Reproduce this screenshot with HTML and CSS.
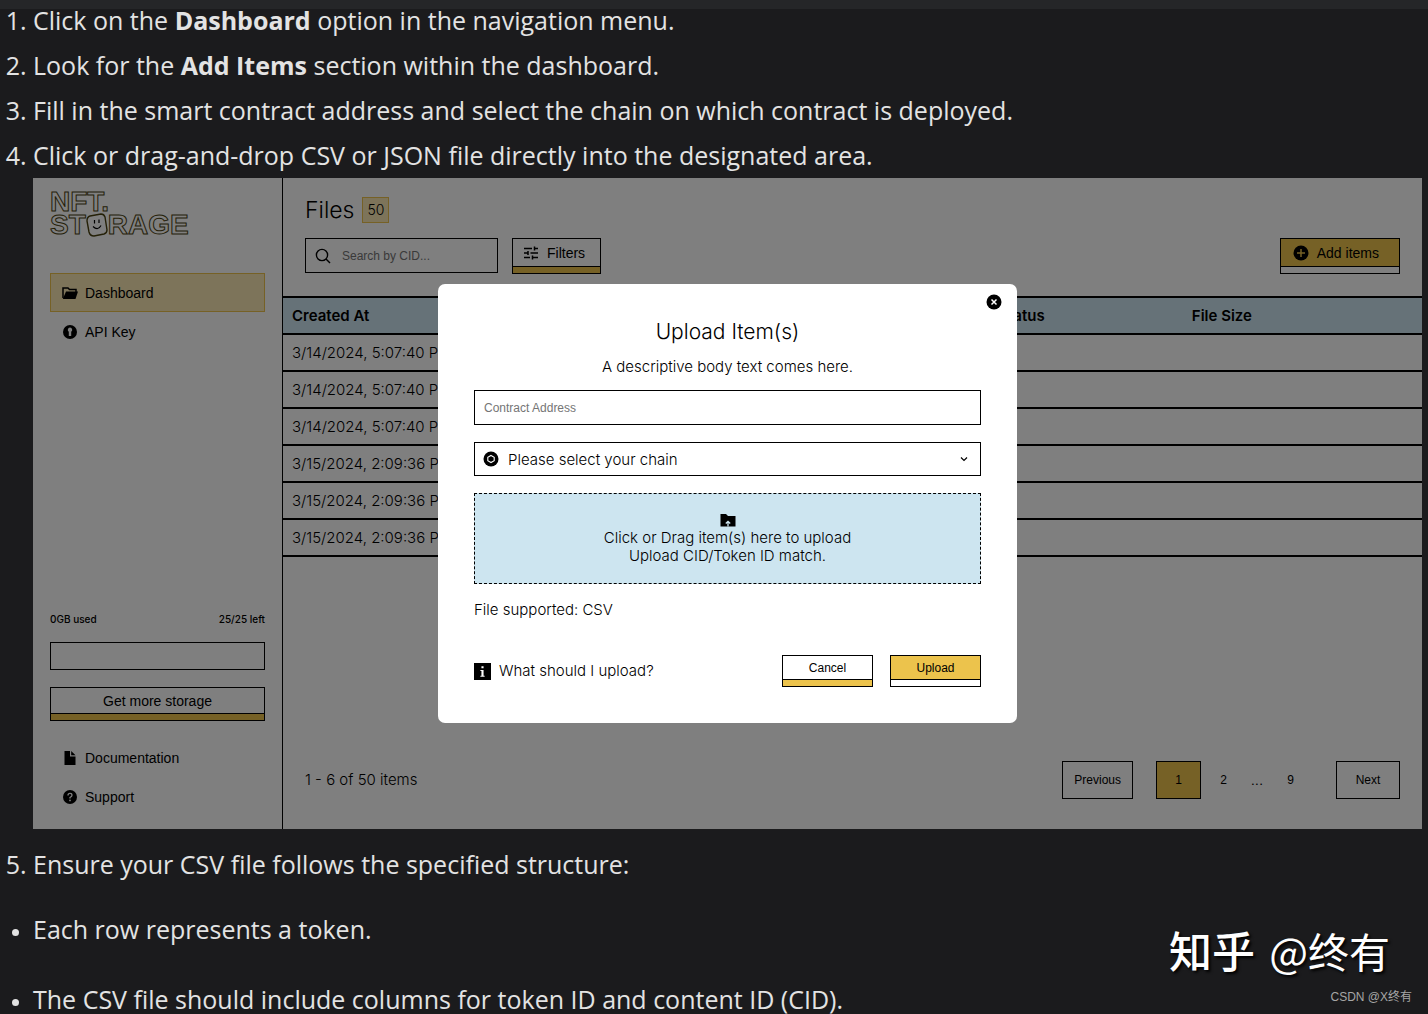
FILE: index.html
```
<!DOCTYPE html>
<html lang="en">
<head>
    <meta charset="UTF-8">
    <meta name="viewport" content="width=device-width, initial-scale=1.0">
    <title>Upload items</title>
    <link rel="stylesheet" href="styles.css">
</head>
<body>
    <main class="article">
        <ol class="steps">
            <li>Click on the <strong>Dashboard</strong> option in the navigation menu.</li>
            <li>Look for the <strong>Add Items</strong> section within the dashboard.</li>
            <li>Fill in the smart contract address and select the chain on which contract is deployed.</li>
            <li>Click or drag-and-drop CSV or JSON file directly into the designated area.
                <div class="app">
                    <!-- Sidebar -->
                    <aside class="sidebar">
                        <div class="logo">
                            <div>NFT.</div>
                            <div class="logo-row">ST<svg class="face" viewBox="0 0 22 24" width="22" height="24"><path d="M4 3 15 1q3 0 4 3l2 13q0 3-3 4L8 23q-4 0-5-4L1 8q0-4 3-5Z" fill="#fff" stroke="#4a4210" stroke-width="1.4"/><path d="M8.500 7v3.500M13 6.500V10M7 13.500q5 4.500 8-1" fill="none" stroke="#000" stroke-width="1.2"/></svg>RAGE</div>
                        </div>
                        <nav class="menu">
                            <a href="#" class="menu-item active">
                                <svg viewBox="0 0 16 16" width="16" height="16"><path d="M1 13V3h5l1.500 1.500H14V7" fill="none" stroke="#000" stroke-width="1.500"/><path d="M4 6.500h12L13.500 14H.800Z"/></svg>
                                Dashboard
                            </a>
                            <a href="#" class="menu-item">
                                <svg viewBox="0 0 16 16" width="16" height="16"><circle cx="8" cy="8" r="7"/><path d="M8 3.500a2.300 2.300 0 0 1 1.200 4.200V12H6.800V7.700A2.300 2.300 0 0 1 8 3.500Z" fill="#fff"/></svg>
                                API Key
                            </a>
                        </nav>
                        <div class="storage">
                            <div class="storage-info"><span>0GB used</span><span>25/25 left</span></div>
                            <div class="storage-bar"></div>
                            <button class="btn btn-storage">Get more storage</button>
                        </div>
                        <nav class="menu">
                            <a href="#" class="menu-item">
                                <svg viewBox="0 0 16 16" width="16" height="16"><path d="M2.500 1H8v5.500h5.500V15h-11Z"/><path d="M9.200 1 13.500 5.300H9.200Z"/></svg>
                                Documentation
                            </a>
                            <a href="#" class="menu-item">
                                <svg viewBox="0 0 16 16" width="16" height="16"><circle cx="8" cy="8" r="7"/><path d="M6 6.400q0-2 2-2t2 1.800q0 1.200-2 2.300v1" fill="none" stroke="#fff" stroke-width="1.300"/><circle cx="8" cy="11.400" r=".9" fill="#fff"/></svg>
                                Support
                            </a>
                        </nav>
                    </aside>

                    <!-- Files -->
                    <section class="files">
                        <div class="files-title">
                            <h2>Files</h2>
                            <span class="count">50</span>
                        </div>
                        <div class="toolbar">
                            <label class="search">
                                <svg viewBox="0 0 16 16" width="16" height="16"><circle cx="7" cy="7" r="5.600" fill="none" stroke="#000" stroke-width="1.400"/><path d="m11 11 4 4" stroke="#000" stroke-width="1.500"/></svg>
                                <input type="text" placeholder="Search by CID..." aria-label="Search by CID">
                            </label>
                            <button class="btn">
                                <svg viewBox="0 0 16 16" width="16" height="16"><path d="M1 3.500h8M11.500 3.500H15M1 8h4M7.500 8H15M1 12.500h6M9.500 12.500H15M11.500 1.500v4M5 6v4M9.500 10.500v4" fill="none" stroke="#000" stroke-width="1.500"/></svg>
                                Filters
                            </button>
                            <button class="btn btn-gold btn-add">
                                <svg viewBox="0 0 16 16" width="16" height="16"><circle cx="8" cy="8" r="7.500"/><path d="M8 4v8M4 8h8" stroke="#ecc34c" stroke-width="1.500"/></svg>
                                Add items
                            </button>
                        </div>
                        <table class="table">
                            <thead>
                                <tr><th class="col-date">Created At</th><th></th><th class="col-status">Status</th><th class="col-size">File Size</th></tr>
                            </thead>
                            <tbody>
                                <tr><td>3/14/2024, 5:07:40 PM</td><td></td><td></td><td></td></tr>
                                <tr><td>3/14/2024, 5:07:40 PM</td><td></td><td></td><td></td></tr>
                                <tr><td>3/14/2024, 5:07:40 PM</td><td></td><td></td><td></td></tr>
                                <tr><td>3/15/2024, 2:09:36 PM</td><td></td><td></td><td></td></tr>
                                <tr><td>3/15/2024, 2:09:36 PM</td><td></td><td></td><td></td></tr>
                                <tr><td>3/15/2024, 2:09:36 PM</td><td></td><td></td><td></td></tr>
                            </tbody>
                        </table>
                        <div class="files-footer">
                            <span>1 - 6 of 50 items</span>
                            <div class="pages">
                                <button class="page page-wide">Previous</button>
                                <div class="page-numbers">
                                    <button class="page page-current">1</button>
                                    <button class="page page-plain">2</button>
                                    <span class="dots">...</span>
                                    <button class="page page-plain">9</button>
                                </div>
                                <button class="page page-wide">Next</button>
                            </div>
                        </div>
                    </section>

                    <!-- Upload dialog -->
                    <div class="overlay">
                        <form class="modal">
                            <button type="button" class="close" aria-label="Close">
                                <svg viewBox="0 0 16 16" width="16" height="16"><circle cx="8" cy="8" r="7.500"/><path d="m5.500 5.500 5 5m0-5-5 5" stroke="#fff" stroke-width="1.500"/></svg>
                            </button>
                            <h3>Upload Item(s)</h3>
                            <p class="modal-text">A descriptive body text comes here.</p>
                            <input class="address" type="text" placeholder="Contract Address" aria-label="Contract Address">
                            <div class="chain">
                                <svg viewBox="0 0 16 16" width="16" height="16"><circle cx="8" cy="8" r="7.500"/><path d="M8 4.400 11.200 6.200v3.600L8 11.600 4.800 9.800V6.200Z" fill="none" stroke="#fff" stroke-width="1.100"/></svg>
                                <select aria-label="Chain">
                                    <option>Please select your chain</option>
                                </select>
                                <svg viewBox="0 0 8 8" width="8" height="8"><path d="m1 2.500 3 3 3-3" fill="none" stroke="#000" stroke-width="1.200"/></svg>
                            </div>
                            <button type="button" class="drop">
                                <svg viewBox="0 0 16 14" width="16" height="14"><path d="M.500 1h5.500l2 2h7.500v10.500H.500Z"/><path d="M8 13.500V8.500M5.800 10.500 8 8.300l2.200 2.200" fill="none" stroke="#cde5f0" stroke-width="1.300"/></svg>
                                <span>Click or Drag item(s) here to upload</span>
                                <span>Upload CID/Token ID match.</span>
                            </button>
                            <p class="supported">File supported: CSV</p>
                            <div class="modal-footer">
                                <a href="#" class="help">
                                    <svg viewBox="0 0 16 16" width="17" height="17"><path d="M0 0h16v16H0Z"/><path d="M7 3h2v2H7ZM6 6.500h3V12h1v1H6v-1h1V7.500H6Z" fill="#fff"/></svg>
                                    What should I upload?
                                </a>
                                <button type="button" class="btn btn-small">Cancel</button>
                                <button type="button" class="btn btn-small btn-gold">Upload</button>
                            </div>
                        </form>
                    </div>
                </div>
            </li>
            <li>Ensure your CSV file follows the specified structure:</li>
        </ol>
        <ul class="notes">
            <li>Each row represents a token.</li>
            <li>The CSV file should include columns for token ID and content ID (CID).</li>
        </ul>
        <div class="watermark">
            <div class="zhihu"><b>知乎</b> @终有</div>
            <div class="csdn">CSDN @X终有</div>
        </div>
    </main>
</body>
</html>
```
FILE: styles.css
```
* {
    box-sizing: border-box;
}
body {
    margin: 0;
    background-color: #1b1b1d;
    color: #e3e3e3;
    font-family: "Open Sans", "Noto Sans CJK SC", sans-serif;
    font-size: 25px;
    line-height: 23px;
}
button, input, select {
    font-family: "Liberation Sans", Arial, sans-serif;
    color: #000;
}
button {
    cursor: pointer;
}
h2, h3, p {
    margin: 0;
    font-weight: 300;
}
svg {
    flex: none;
}

/* Article */
.article {
    position: relative;
    min-height: 100vh;
    overflow: hidden;
    padding: 0 6px 0 33px;
    border-top: 9px solid #252628;
}
.steps, .notes {
    margin: 0;
    padding: 0;
}
.steps li {
    margin-bottom: 22px;
}
.steps li:last-child {
    margin-bottom: 42px;
}
.notes li {
    margin-bottom: 47px;
}
.notes li:last-child {
    margin-bottom: 0;
}
.notes li::marker {
    font-size: 21px;
}
.app {
    position: relative;
    display: flex;
    min-height: 651px;
    margin: 11px 0 24px;
    background-color: #fff;
    color: #000;
    font-family: Inter, "Liberation Sans", sans-serif;
    font-size: 15px;
    font-weight: 300;
    line-height: 18px;
}

/* Sidebar */
.sidebar {
    display: flex;
    flex-direction: column;
    width: 250px;
    padding: 12px 17px 13px;
    border-right: 1px solid #000;
}
.logo {
    margin-bottom: 36px;
    color: #fff;
    font-family: "Liberation Sans", Arial, sans-serif;
    font-size: 28px;
    font-weight: bold;
    line-height: 23px;
    -webkit-text-stroke: 1px #4a4210;
}
.logo-row {
    display: flex;
}
.menu-item {
    display: flex;
    align-items: center;
    gap: 7px;
    height: 39px;
    padding: 0 11px;
    border: 1px solid transparent;
    color: #000;
    font-family: "Liberation Sans", Arial, sans-serif;
    font-size: 14px;
    font-weight: normal;
    text-decoration: none;
}
.menu-item.active {
    background-color: #fbe9b5;
    border-color: #ecc34c;
}
.storage {
    margin-top: auto;
    margin-bottom: 17px;
}
.storage-info {
    display: flex;
    justify-content: space-between;
    font-size: 10px;
    font-weight: 500;
}
.storage-bar {
    height: 28px;
    margin: 14px 0 17px;
    border: 1px solid #000;
}

/* Buttons */
.btn {
    display: flex;
    align-items: center;
    justify-content: center;
    gap: 8px;
    height: 36px;
    padding: 0 15px 7px 10px;
    background-color: #fff;
    border: 1px solid #000;
    box-shadow: inset 0 -6px #ecc34c, inset 0 -7px #000;
    font-size: 14px;
}
.btn-gold {
    background-color: #ecc34c;
    box-shadow: inset 0 -6px #fff, inset 0 -7px #000;
}
.btn-storage {
    width: 100%;
    height: 34px;
    padding: 0 0 7px;
}
.btn-add {
    margin-left: auto;
    padding: 0 20px 7px 12px;
}
.btn-small {
    width: 91px;
    height: 32px;
    padding: 0 0 7px;
    font-size: 12px;
}

/* Files */
.files {
    display: flex;
    flex: 1;
    flex-direction: column;
    padding-top: 18px;
}
.files-title {
    display: flex;
    align-items: center;
    gap: 8px;
    padding: 0 22px;
}
.files-title h2 {
    font-size: 23px;
    line-height: 28px;
}
.count {
    padding: 3px 4px;
    background-color: #fbe9b5;
    border: 1px solid #ecc34c;
    font-size: 14px;
}
.toolbar {
    display: flex;
    gap: 14px;
    padding: 14px 22px 22px;
}
.search {
    display: flex;
    align-items: center;
    gap: 11px;
    width: 193px;
    height: 35px;
    padding: 0 9px;
    border: 1px solid #000;
}
.search input {
    width: 100%;
    padding: 0;
    border: 0;
    outline: 0;
    font-size: 12px;
}
.table {
    width: 100%;
    border-spacing: 0;
    table-layout: fixed;
    border-top: 2px solid #000;
    text-align: left;
}
.table th, .table td {
    height: 37px;
    padding: 0 9px;
    border-bottom: 2px solid #000;
    white-space: nowrap;
}
.table th {
    background-color: #cde5f0;
    font-weight: 600;
}
.col-status {
    width: 17%;
}
.col-size {
    width: 21%;
}
.files-footer {
    display: flex;
    align-items: center;
    justify-content: space-between;
    margin-top: auto;
    padding: 0 22px 30px;
}
.pages {
    display: flex;
    gap: 23px;
}
.page-numbers {
    display: flex;
    align-items: center;
}
.page {
    height: 38px;
    padding: 0 11px;
    background-color: transparent;
    border: 1px solid #000;
    font-size: 12px;
}
.page-wide {
    min-width: 64px;
}
.page-current {
    width: 45px;
    background-color: #ecc34c;
}
.page-plain {
    width: 45px;
    border-color: transparent;
}
.dots {
    width: 22px;
    text-align: center;
}

/* Upload dialog */
.overlay {
    position: absolute;
    inset: 0;
    display: flex;
    align-items: center;
    justify-content: center;
    background-color: rgba(0, 0, 0, 0.5);
}
.modal {
    position: relative;
    display: flex;
    flex-direction: column;
    width: 579px;
    padding: 36px;
    background-color: #fff;
    border-radius: 7px;
}
.close {
    position: absolute;
    top: 10px;
    right: 15px;
    display: flex;
    padding: 0;
    background: none;
    border: 0;
}
.modal h3 {
    font-size: 21px;
    line-height: 24px;
    text-align: center;
}
.modal-text {
    margin: 14px 0;
    text-align: center;
}
.address {
    height: 35px;
    margin-bottom: 17px;
    padding: 0 9px;
    border: 1px solid #000;
    font-size: 12px;
}
.chain {
    display: flex;
    align-items: center;
    height: 34px;
    margin-bottom: 17px;
    padding: 0 12px 0 8px;
    border: 1px solid #000;
}
.chain select {
    flex: 1;
    padding: 0 9px;
    appearance: none;
    background: none;
    border: 0;
    font-family: Inter, sans-serif;
    font-size: 15px;
    font-weight: 300;
}
.drop {
    display: flex;
    flex-direction: column;
    align-items: center;
    justify-content: center;
    height: 91px;
    background-color: #cde5f0;
    border: 1px dashed #000;
    font-family: Inter, sans-serif;
    font-size: 15px;
    font-weight: 300;
    line-height: 18px;
}
.drop svg {
    margin-bottom: 2px;
}
.supported {
    margin: 17px 0 36px;
}
.modal-footer {
    display: flex;
    align-items: center;
    gap: 17px;
}
.help {
    display: flex;
    align-items: center;
    gap: 8px;
    margin-right: auto;
    color: #000;
    text-decoration: none;
}
input::placeholder {
    color: #757575;
}

/* Watermarks */
.watermark {
    position: absolute;
    right: 16px;
    bottom: 8px;
    font-family: "Noto Sans CJK SC", sans-serif;
    text-align: right;
}
.zhihu {
    margin: 0 22px 16px 0;
    color: #fff;
    font-size: 41px;
    line-height: 44px;
    text-shadow: 2px 2px 3px #000;
}
.zhihu b {
    margin-right: 5px;
    font-size: 43px;
    font-weight: 500;
}
.csdn {
    color: #a6a6a6;
    font-family: "Liberation Sans", "Noto Sans CJK SC", sans-serif;
    font-size: 12px;
    line-height: 18px;
}
```
